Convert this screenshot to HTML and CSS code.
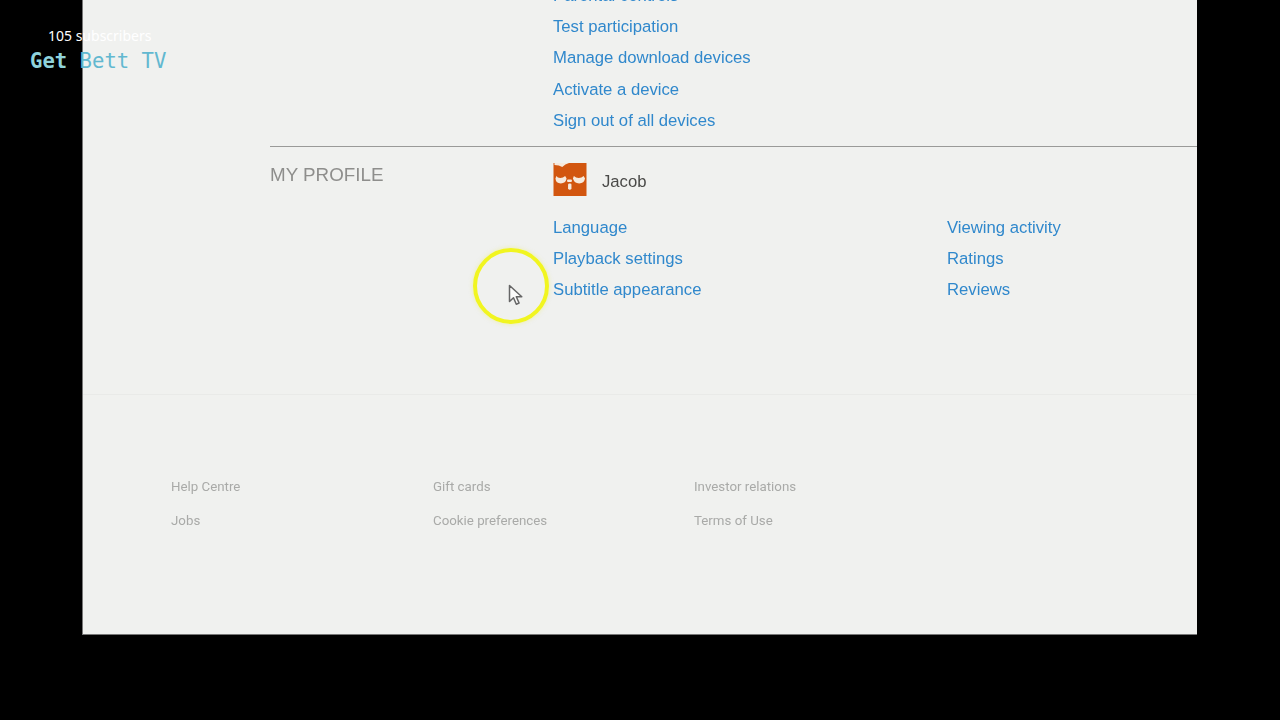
FILE: index.html
```html
<!DOCTYPE html>
<html lang="en">
<head>
<meta charset="utf-8">
<title>Account</title>
<link rel="stylesheet" href="styles.css">
</head>
<body>
<div class="page">
  <main class="sheet">
    <section class="account">
      <div class="side"></div>
      <ul class="links">
        <li><a>Parental controls</a></li>
        <li><a>Test participation</a></li>
        <li><a>Manage download devices</a></li>
        <li><a>Activate a device</a></li>
        <li><a>Sign out of all devices</a></li>
      </ul>
    </section>
    <section class="profile">
      <h2 class="side">MY PROFILE</h2>
      <div class="profile-body">
        <div class="who">
          <svg class="avatar" viewBox="0 0 34 34" aria-hidden="true">
            <rect width="34" height="34" fill="#d2560f"/>
            <path d="M1 0h15q-4 1-7 4-3-2-8-2z" fill="#f6e9dc"/>
            <path d="M3 13.500q1 2 4 2t5-2l1.500 2.500q-1 5-6 5T2 16zM21 13.500q2 2 5 2t5-2l1.500 2.500q-1 5-6 5T20 16z" fill="#f6e9dc"/>
            <rect x="14" y="17" width="5" height="2.500" rx="1" fill="#f6e9dc"/>
            <rect x="15" y="21" width="3.500" height="6.500" rx="1.500" fill="#f6e9dc"/>
          </svg>
          <span class="name">Jacob</span>
        </div>
        <div class="profile-links">
          <ul class="links">
            <li><a>Language</a></li>
            <li><a>Playback settings</a></li>
            <li><a>Subtitle appearance</a></li>
          </ul>
          <ul class="links">
            <li><a>Viewing activity</a></li>
            <li><a>Ratings</a></li>
            <li><a>Reviews</a></li>
          </ul>
        </div>
      </div>
    </section>
    <footer class="footer">
      <a>Help Centre</a>
      <a>Gift cards</a>
      <a>Investor relations</a>
      <a>Jobs</a>
      <a>Cookie preferences</a>
      <a>Terms of Use</a>
    </footer>
  </main>
  <div class="overlay">
    <div class="subs">105 subscribers</div>
    <div class="channel"><b>Get</b> Bett TV</div>
  </div>
  <div class="cursor-ring"></div>
  <svg class="cursor" viewBox="0 0 16 22" aria-hidden="true">
    <path d="M1.500 1.500v16l4-3.800 2.800 6.500 2.800-1.200-2.800-6.300h5.500z" fill="#fbfbfa" stroke="#666" stroke-width="1.500" stroke-linejoin="round"/>
  </svg>
</div>
</body>
</html>
```
FILE: styles.css
```css
* { box-sizing: border-box; }
html, body { margin: 0; padding: 0; }
body { background: #000; font-family: "Liberation Sans", Arial, sans-serif; }
.page { position: relative; width: 1280px; height: 720px; overflow: hidden; background: #000; padding-left: 82px; }
.sheet { width: 1115px; height: 635px; background: #f0f1ef; border-left: 1px solid #777; border-bottom: 1px solid #777; overflow: hidden; }
.account { display: flex; height: 147px; margin-left: 187px; border-bottom: 1px solid #9a9a98; align-items: flex-end; }
.side { width: 283px; flex: none; margin: 0; }
ul.links { list-style: none; margin: 0; padding: 0; display: flex; flex-direction: column; }
.links li { height: 31.25px; line-height: 31.25px; font-size: 16.7px; color: #3088cc; white-space: nowrap; filter: blur(.3px); }
.account .links { padding-bottom: 10px; }
.profile { display: flex; height: 248px; padding-left: 187px; border-bottom: 1px solid #e9eae8; }
.profile h2 { font-size: 18.8px; font-weight: 400; color: #8e8e8c; line-height: 20px; padding-top: 18px; filter: blur(.3px); }
.profile-body { flex: 1; padding-top: 16px; }
.who { display: flex; align-items: center; gap: 15px; height: 33px; }
.avatar { width: 34px; height: 33px; display: block; filter: blur(.4px); }
.name { font-size: 16.7px; color: #4a4a48; padding-top: 5px; filter: blur(.3px); }
.profile-links { display: flex; margin-top: 15.5px; }
.profile-links .links { width: 394px; }
.profile-links .links li { height: 31px; line-height: 31px; }
.footer { display: grid; grid-template-columns: 262px 261px 300px; grid-auto-rows: 33.5px; padding: 75px 0 0 88px; font-family: Roboto, "Liberation Sans", sans-serif; font-size: 13.3px; color: #a9aaa8; line-height: 33px; filter: blur(.3px); }
.overlay { position: absolute; left: 30px; top: 26px; z-index: 2; }
.subs { font-family: "Noto Sans", sans-serif; font-size: 14px; line-height: 20px; margin-left: 18px; color: #fff; }
.channel { font-family: "DejaVu Sans Mono", monospace; font-size: 20.6px; line-height: 30px; color: #62b8d0; white-space: nowrap; }
.channel b { color: #8fd3dc; }
.cursor-ring { position: absolute; left: 473px; top: 248px; width: 76px; height: 76px; border-radius: 50%; border: 4px solid #f1f520; box-shadow: 0 0 4px rgba(235,240,90,.5); filter: blur(.7px); z-index: 2; }
.cursor { position: absolute; left: 508px; top: 284px; width: 16px; height: 22px; z-index: 3; }
```
